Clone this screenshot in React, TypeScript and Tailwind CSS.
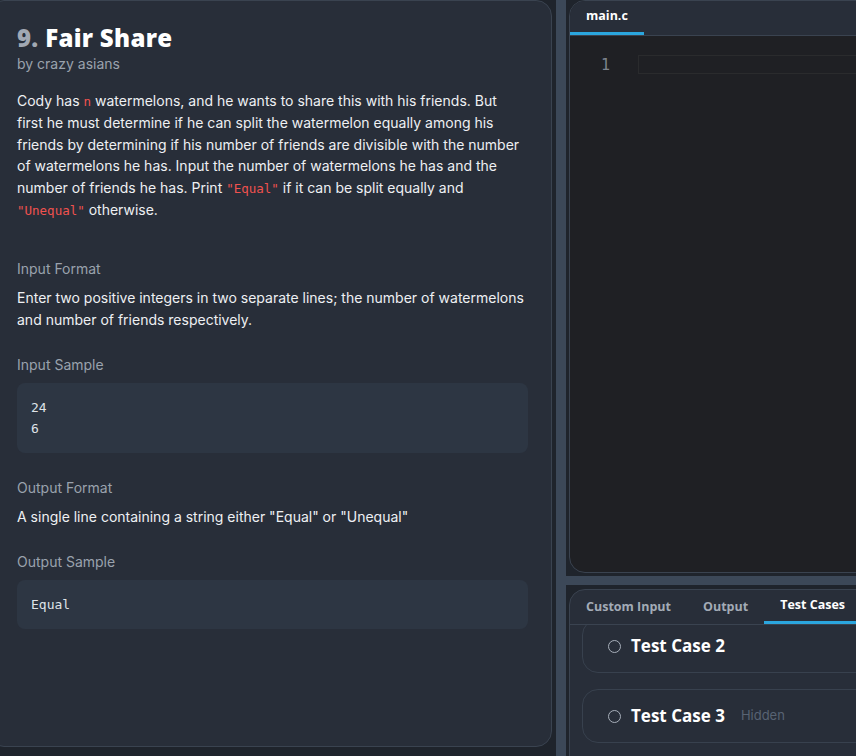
import React from "react";

const Code = ({ children }: { children: React.ReactNode }) => (
  <code className="font-['DejaVu_Sans_Mono',monospace] text-[12.5px] text-[#f0524f]">{children}</code>
);

function Section({ label, children }: { label: string; children: React.ReactNode }) {
  return (
    <div className="mt-6">
      <div className="text-sm leading-[21px] text-[#9aa2ad] mb-2">{label}</div>
      {children}
    </div>
  );
}

function SampleBox({ lines }: { lines: string[] }) {
  return (
    <div className="rounded-lg bg-[#2d3643] px-3.5 py-3.5 font-['DejaVu_Sans_Mono',monospace] text-[13px] leading-[21px] text-[#dfe3e8]">
      {lines.map((l) => (
        <div key={l}>{l}</div>
      ))}
    </div>
  );
}

function TestCaseCard({ title, hidden }: { title: string; hidden?: boolean }) {
  return (
    <div className="h-[54px] shrink-0 rounded-2xl border border-[#38414e] flex items-center pl-[25px]">
      <span className="w-[13px] h-[13px] rounded-full border-[1.5px] border-[#a7afba]" />
      <span className="ml-[10px] font-['Open_Sans',sans-serif] font-bold text-[17px] text-white">{title}</span>
      {hidden && <span className="ml-4 text-[13px] text-[#586373]">Hidden</span>}
    </div>
  );
}

export default function App() {
  return (
    <div className="w-[856px] h-[756px] overflow-hidden bg-[#1f242c] flex font-['Inter',sans-serif]">
      {/* Problem statement */}
      <div className="-ml-[12px] w-[564px] h-[747px] shrink-0 rounded-2xl border border-[#3a4350] bg-[#282e39] pl-[28px] pr-[23px] pt-[21px]">
        <h1 className="text-2xl leading-8 font-extrabold tracking-[0.3px] font-['Open_Sans',sans-serif]">
          <span className="text-[#a1a8b3]">9.</span> <span className="text-white">Fair Share</span>
        </h1>
        <p className="text-sm leading-5 text-[#9aa2ad]">by crazy asians</p>

        <p className="mt-4 pr-[6px] text-sm leading-[21.4px] text-[#eef0f3]">
          Cody has <Code>n</Code> watermelons, and he wants to share this with his friends. But first he must
          determine if he can split the watermelon equally among his friends by determining if his number of
          friends are divisible with the number of watermelons he has. Input the number of watermelons he has and
          the number of friends he has. Print <Code>"Equal"</Code> if it can be split equally and{" "}
          <Code>"Unequal"</Code> otherwise.
        </p>

        <div className="mt-[37px]">
          <Section label="Input Format">
            <p className="text-sm leading-[21.4px] text-[#eef0f3]">
              Enter two positive integers in two separate lines; the number of watermelons and number of friends
              respectively.
            </p>
          </Section>
        </div>

        <Section label="Input Sample">
          <SampleBox lines={["24", "6"]} />
        </Section>

        <Section label="Output Format">
          <p className="text-sm leading-[21.4px] text-[#eef0f3]">
            A single line containing a string either "Equal" or "Unequal"
          </p>
        </Section>

        <div className="-mt-[1px]">
          <Section label="Output Sample">
            <SampleBox lines={["Equal"]} />
          </Section>
        </div>
      </div>

      {/* vertical gutter */}
      <div className="w-[17px] shrink-0 pl-[4px]">
        <div className="w-[10px] h-full bg-[#3c4858]" />
      </div>

      {/* right column */}
      <div className="w-[420px] shrink-0 flex flex-col">
        {/* editor */}
        <div className="h-[573px] shrink-0 rounded-2xl border border-[#3a4350] bg-[#1f2024] overflow-hidden flex flex-col">
          <div className="h-[35px] shrink-0 bg-[#282e39] border-b border-[#3a4350] flex">
            <div className="px-4 flex items-center border-b-[3px] border-[#2ba6de] font-['Open_Sans',sans-serif] font-bold text-[12.5px] text-white">
              main.c
            </div>
          </div>
          <div className="pt-[19px] flex">
            <div className="w-[40px] pt-[1px] text-right font-['DejaVu_Sans_Mono',monospace] text-[15px] leading-[19px] text-[#7d848e]">
              1
            </div>
            <div className="ml-[28px] flex-1 h-[19px] border border-[#2a2b2d]" />
          </div>
        </div>

        {/* horizontal gutter */}
        <div className="h-[16px] shrink-0 pt-[3px]">
          <div className="-ml-[3px] h-[9px] bg-[#3c4858]" />
        </div>

        {/* bottom panel */}
        <div className="h-[300px] shrink-0 rounded-t-2xl border border-[#3a4350] bg-[#282e39] flex flex-col overflow-hidden">
          <div className="h-[35px] shrink-0 border-b border-[#3a4350] flex font-['Open_Sans',sans-serif] font-bold text-[12.5px]">
            <div className="px-4 flex items-center text-[#a3abb6]">Custom Input</div>
            <div className="px-4 flex items-center text-[#a3abb6]">Output</div>
            <div className="px-4 flex items-center border-b-[3px] border-[#2ba6de] text-white">Test Cases</div>
          </div>
          <div className="flex-1 overflow-hidden px-3">
            <div className="-mt-[6px] flex flex-col gap-4">
              <TestCaseCard title="Test Case 2" />
              <TestCaseCard title="Test Case 3" hidden />
            </div>
          </div>
        </div>
      </div>
    </div>
  );
}
